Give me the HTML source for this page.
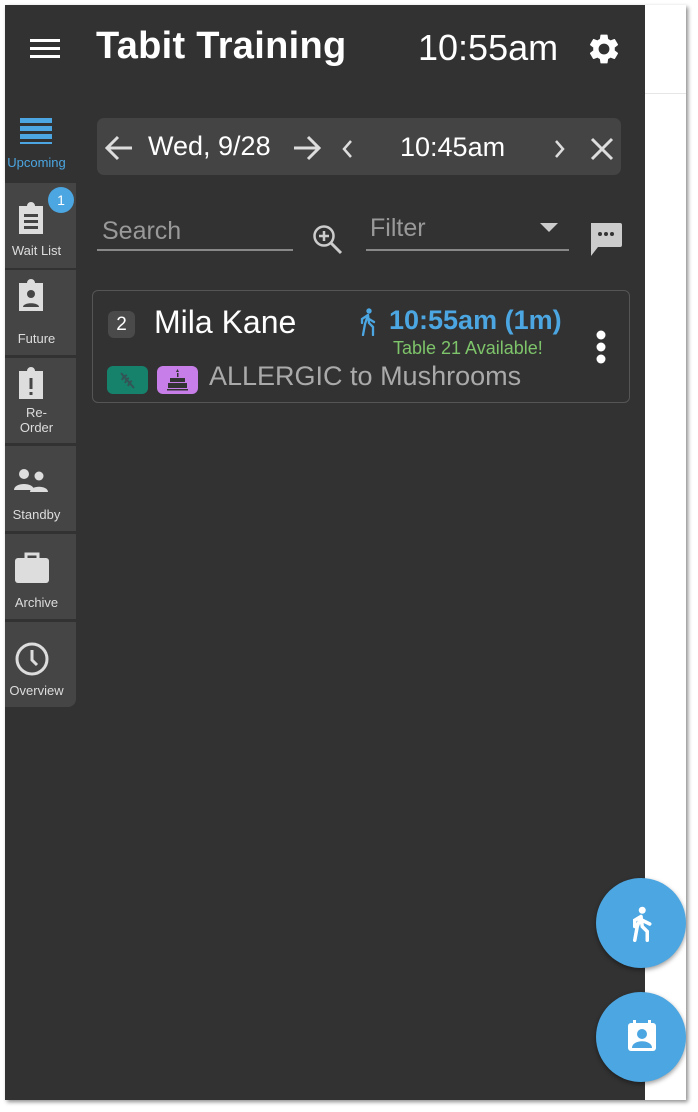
<!DOCTYPE html>
<html><head><meta charset="utf-8"><style>
*{margin:0;padding:0;box-sizing:border-box}
body{width:698px;height:1112px;background:#fff;position:relative;overflow:hidden;font-family:"Liberation Sans",sans-serif}
.frame{position:absolute;left:5px;top:5px;width:681px;height:1095px;overflow:hidden;box-shadow:2px 2px 4px rgba(0,0,0,.45);background:#fff}
.dark{position:absolute;left:0;top:0;width:640px;height:1095px;background:#323232}
.line{position:absolute;left:640px;top:88px;width:41px;height:1px;background:#e6e6e6}
.abs{position:absolute}
.w{color:#fff}
.side{position:absolute;left:0;width:71px;background:#454545;color:#ddd;font-size:13px;text-align:center}
.side .lbl{position:absolute;left:-4px;width:71px;text-align:center;line-height:15px}
.side svg{margin-left:-4px}
.fab{position:absolute;width:90px;height:90px;border-radius:50%;background:#4ba6e1;box-shadow:0 2px 5px rgba(0,0,0,.4)}
</style></head><body>
<div class="frame">
<div class="dark"></div>
<div class="line"></div>
<svg class="abs" style="left:25px;top:33px" width="32" height="22"><rect y="1" width="30" height="3" fill="#fff"/><rect y="9" width="30" height="3" fill="#fff"/><rect y="17" width="30" height="3" fill="#fff"/></svg>
<div class="abs w" style="left:91px;top:20px;font-size:38px;font-weight:bold;letter-spacing:0.3px">Tabit Training</div>
<div class="abs w" style="left:413px;top:22px;font-size:36px">10:55am</div>
<svg class="abs" style="left:581px;top:26px" width="36" height="36" viewBox="0 0 24 24"><path fill="#fff" d="M19.14 12.94c.04-.3.06-.61.06-.94 0-.32-.02-.64-.07-.94l2.03-1.58a.49.49 0 0 0 .12-.61l-1.92-3.32a.49.49 0 0 0-.59-.22l-2.39.96c-.5-.38-1.030-.7-1.62-.94l-.36-2.54a.48.48 0 0 0-.48-.41h-3.84a.48.48 0 0 0-.47.41l-.36 2.54c-.59.24-1.13.57-1.62.94l-2.39-.96a.48.48 0 0 0-.59.22L2.74 8.87a.47.47 0 0 0 .12.61l2.03 1.58c-.05.3-.09.63-.09.94s.02.64.07.94l-2.03 1.58a.49.49 0 0 0-.12.61l1.92 3.32c.12.22.37.29.59.22l2.39-.96c.5.38 1.03.7 1.62.94l.36 2.540c.05.24.24.41.48.41h3.84c.24 0 .44-.17.47-.41l.36-2.54c.59-.24 1.13-.56 1.62-.94l2.39.96c.22.08.47 0 .59-.22l1.92-3.32a.47.47 0 0 0-.12-.61l-2.01-1.58zM12 15.6a3.6 3.6 0 1 1 0-7.2 3.6 3.6 0 0 1 0 7.2z"/></svg>
<svg class="abs" style="left:15px;top:113px" width="32" height="32"><rect y="0" width="32" height="5" fill="#4ba6e1"/><rect y="8" width="32" height="5" fill="#4ba6e1"/><rect y="16" width="32" height="5" fill="#4ba6e1"/><rect y="24" width="32" height="2" fill="#4ba6e1"/></svg>
<div class="abs" style="left:-4px;top:150px;width:71px;text-align:center;font-size:13px;color:#4ba6e1">Upcoming</div>
<div class="side" style="top:178px;height:85px"><svg class="abs" style="left:15px;top:18px" width="30" height="34" viewBox="0 0 30 34"><path fill="#ddd" d="M3 5h8a4 4 0 0 1 8 0h8v28H3z"/><rect x="8" y="13" width="14" height="3" fill="#454545"/><rect x="8" y="19" width="14" height="3" fill="#454545"/><rect x="8" y="25" width="14" height="3" fill="#454545"/></svg><div class="lbl" style="top:60px">Wait List</div></div>
<div class="abs" style="left:43px;top:182px;width:26px;height:26px;border-radius:50%;background:#4ba6e1;color:#fff;font-size:14px;text-align:center;line-height:26px">1</div>
<div class="side" style="top:265px;height:85px"><svg class="abs" style="left:15px;top:8px" width="30" height="34" viewBox="0 0 30 34"><path fill="#ddd" d="M3 5h8a4 4 0 0 1 8 0h8v28H3z"/><circle cx="15" cy="16" r="4" fill="#454545"/><path d="M7 29c0-5 16-5 16 0z" fill="#454545"/></svg><div class="lbl" style="top:61px">Future</div></div>
<div class="side" style="top:353px;height:85px"><svg class="abs" style="left:15px;top:8px" width="30" height="34" viewBox="0 0 30 34"><path fill="#ddd" d="M3 5h8a4 4 0 0 1 8 0h8v28H3z"/><rect x="13.5" y="12" width="3" height="11" fill="#454545"/><rect x="13.5" y="26" width="3" height="3" fill="#454545"/></svg><div class="lbl" style="top:47px">Re-<br>Order</div></div>
<div class="side" style="top:441px;height:85px"><svg class="abs" style="left:13px;top:22px" width="36" height="26" viewBox="0 0 36 26"><circle cx="10" cy="6" r="5" fill="#ddd"/><circle cx="25" cy="8" r="4.5" fill="#ddd"/><path d="M0 22c0-8 20-8 20 0z M16 24c0-7 18-7 18 0z" fill="#ddd"/></svg><div class="lbl" style="top:61px">Standby</div></div>
<div class="side" style="top:529px;height:85px"><svg class="abs" style="left:13px;top:18px" width="36" height="32" viewBox="0 0 36 32"><path d="M12 6V2h12v4" stroke="#ddd" stroke-width="3" fill="none"/><rect x="1" y="6" width="34" height="25" rx="3" fill="#ddd"/></svg><div class="lbl" style="top:61px">Archive</div></div>
<div class="side" style="top:617px;height:85px;border-bottom-right-radius:8px"><svg class="abs" style="left:13px;top:19px" width="36" height="36"><circle cx="18" cy="18" r="15" stroke="#ddd" stroke-width="3" fill="none"/><path d="M18 9v10l5 5" stroke="#ddd" stroke-width="3" fill="none"/></svg><div class="lbl" style="top:61px">Overview</div></div>
<div class="abs" style="left:92px;top:113px;width:524px;height:57px;border-radius:7px;background:#444"></div>
<svg class="abs" style="left:99px;top:130px" width="30" height="26"><path d="M3 13h25M14 2L3 13l11 11" stroke="#ddd" stroke-width="3" fill="none"/></svg>
<div class="abs w" style="left:143px;top:126px;font-size:27px">Wed, 9/28</div>
<svg class="abs" style="left:288px;top:130px" width="30" height="26"><path d="M1 13h25M15 2l11 11-11 11" stroke="#ddd" stroke-width="3" fill="none"/></svg>
<svg class="abs" style="left:335px;top:133px" width="14" height="22"><path d="M11 3L4 11l7 8" stroke="#ddd" stroke-width="2.5" fill="none"/></svg>
<div class="abs w" style="left:395px;top:127px;font-size:27px">10:45am</div>
<svg class="abs" style="left:548px;top:133px" width="14" height="22"><path d="M3 3l7 8-7 8" stroke="#ddd" stroke-width="2.5" fill="none"/></svg>
<svg class="abs" style="left:584px;top:131px" width="26" height="26"><path d="M3 3l20 20M23 3L3 23" stroke="#ddd" stroke-width="3"/></svg>
<div class="abs" style="left:97px;top:212px;font-size:25px;color:#999">Search</div>
<div class="abs" style="left:92px;top:244px;width:196px;height:2px;background:#888"></div>
<svg class="abs" style="left:306px;top:218px" width="34" height="34"><circle cx="13" cy="13" r="9.5" stroke="#ccc" stroke-width="2.5" fill="none"/><path d="M13 8v10M8 13h10" stroke="#ccc" stroke-width="2.5"/><path d="M20 20l10 10" stroke="#ccc" stroke-width="3"/></svg>
<div class="abs" style="left:365px;top:209px;font-size:25px;color:#999">Filter</div>
<svg class="abs" style="left:535px;top:218px" width="18" height="10"><path d="M0 0h18L9 9z" fill="#ccc"/></svg>
<div class="abs" style="left:361px;top:244px;width:203px;height:2px;background:#888"></div>
<svg class="abs" style="left:583px;top:217px" width="36" height="36"><path d="M3 1h29a2 2 0 0 1 2 2v20a2 2 0 0 1-2 2H10l-7 9z" fill="#ccc"/><circle cx="12" cy="12" r="2" fill="#333"/><circle cx="18" cy="12" r="2" fill="#333"/><circle cx="24" cy="12" r="2" fill="#333"/></svg>
<div class="abs" style="left:87px;top:285px;width:538px;height:113px;border:1.5px solid #555;border-radius:6px"></div>
<div class="abs" style="left:103px;top:306px;width:27px;height:27px;border-radius:6px;background:#4a4a4a;color:#fff;font-size:19px;text-align:center;line-height:27px">2</div>
<div class="abs w" style="left:149px;top:299px;font-size:32px">Mila Kane</div>
<svg class="abs" style="left:351px;top:303px" width="24" height="28" viewBox="0 0 24 28"><circle cx="13" cy="3" r="2.7" fill="#4ba6e1"/><path d="M12 7l-3 9-2 11M12 7l-6 4v4M12 7l1 8 4 4v8M13 11l5 3" stroke="#4ba6e1" stroke-width="2.3" fill="none" stroke-linecap="round"/></svg>
<div class="abs" style="left:384px;top:300px;font-size:27px;color:#4ba6e1;font-weight:bold">10:55am (1m)</div>
<div class="abs" style="left:388px;top:333px;font-size:18px;color:#7ec46a">Table 21 Available!</div>
<svg class="abs" style="left:590px;top:325px" width="12" height="40"><circle cx="6" cy="5" r="4.5" fill="#fff"/><circle cx="6" cy="17" r="4.5" fill="#fff"/><circle cx="6" cy="29" r="4.5" fill="#fff"/></svg>
<div class="abs" style="left:102px;top:361px;width:41px;height:28px;border-radius:6px;background:#16826c"><svg width="41" height="28"><path d="M14 7l13 15" stroke="#355" stroke-width="2"/><path d="M16 11l4-2M18 14l4-2M21 17l4-2M17 10l-2 4M20 13l-2 4M23 16l-2 4" stroke="#355" stroke-width="2"/></svg></div>
<div class="abs" style="left:152px;top:361px;width:41px;height:28px;border-radius:6px;background:#c77ee9"><svg width="41" height="28"><path d="M20.5 3l1.5 3h-3z" fill="#333"/><rect x="20" y="7" width="1.5" height="4" fill="#333"/><rect x="13" y="12" width="15" height="4" fill="#333"/><rect x="11" y="17" width="19" height="5" fill="#333"/><rect x="10" y="23" width="21" height="1.5" fill="#333"/></svg></div>
<div class="abs" style="left:204px;top:356px;font-size:27px;color:#aaa">ALLERGIC to Mushrooms</div>
<div class="fab" style="left:591px;top:873px"><svg class="abs" style="left:30px;top:28px" width="30" height="36" viewBox="0 0 24 28"><circle cx="13" cy="3" r="2.8" fill="#fff"/><path d="M12 8l-3 8-2 11M12 8l-5 3v5M12 8l1 8 4 4v7M13 11l6 3" stroke="#fff" stroke-width="2.8" fill="none" stroke-linecap="round"/></svg></div>
<div class="fab" style="left:591px;top:987px"><svg class="abs" style="left:28px;top:26px" width="36" height="36" viewBox="0 0 36 36"><rect x="9" y="2" width="3" height="6" fill="#fff"/><rect x="24" y="2" width="3" height="6" fill="#fff"/><rect x="4" y="5" width="28" height="28" rx="3" fill="#fff"/><circle cx="18" cy="16" r="5" fill="#4ba6e1"/><path d="M8 30c0-9 20-9 20 0z" fill="#4ba6e1"/></svg></div>
</div>
</body></html>
